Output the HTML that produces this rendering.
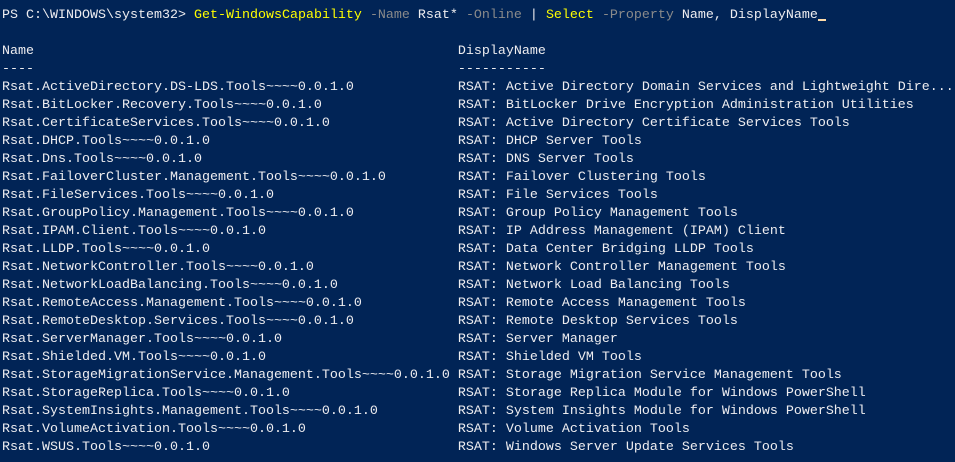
<html><head><style>
body{margin:0;background:#012456;width:955px;height:462px;overflow:hidden}
pre{margin:0;position:absolute;left:2px;top:7px;font-family:"Liberation Mono",monospace;font-size:13.33px;line-height:18px;color:#eeedf0}
.y{color:#ffff00}.g{color:#8a8a8a}
.c{display:inline-block;width:8px;height:2px;background:#fedba9;vertical-align:-3px}
</style></head><body><pre>PS C:\WINDOWS\system32> <span class="y">Get-WindowsCapability</span> <span class="g">-Name</span> Rsat* <span class="g">-Online</span> | <span class="y">Select</span> <span class="g">-Property</span> Name, DisplayName<span class="c"></span>

Name                                                     DisplayName
----                                                     -----------
Rsat.ActiveDirectory.DS-LDS.Tools~~~~0.0.1.0             RSAT: Active Directory Domain Services and Lightweight Dire...
Rsat.BitLocker.Recovery.Tools~~~~0.0.1.0                 RSAT: BitLocker Drive Encryption Administration Utilities
Rsat.CertificateServices.Tools~~~~0.0.1.0                RSAT: Active Directory Certificate Services Tools
Rsat.DHCP.Tools~~~~0.0.1.0                               RSAT: DHCP Server Tools
Rsat.Dns.Tools~~~~0.0.1.0                                RSAT: DNS Server Tools
Rsat.FailoverCluster.Management.Tools~~~~0.0.1.0         RSAT: Failover Clustering Tools
Rsat.FileServices.Tools~~~~0.0.1.0                       RSAT: File Services Tools
Rsat.GroupPolicy.Management.Tools~~~~0.0.1.0             RSAT: Group Policy Management Tools
Rsat.IPAM.Client.Tools~~~~0.0.1.0                        RSAT: IP Address Management (IPAM) Client
Rsat.LLDP.Tools~~~~0.0.1.0                               RSAT: Data Center Bridging LLDP Tools
Rsat.NetworkController.Tools~~~~0.0.1.0                  RSAT: Network Controller Management Tools
Rsat.NetworkLoadBalancing.Tools~~~~0.0.1.0               RSAT: Network Load Balancing Tools
Rsat.RemoteAccess.Management.Tools~~~~0.0.1.0            RSAT: Remote Access Management Tools
Rsat.RemoteDesktop.Services.Tools~~~~0.0.1.0             RSAT: Remote Desktop Services Tools
Rsat.ServerManager.Tools~~~~0.0.1.0                      RSAT: Server Manager
Rsat.Shielded.VM.Tools~~~~0.0.1.0                        RSAT: Shielded VM Tools
Rsat.StorageMigrationService.Management.Tools~~~~0.0.1.0 RSAT: Storage Migration Service Management Tools
Rsat.StorageReplica.Tools~~~~0.0.1.0                     RSAT: Storage Replica Module for Windows PowerShell
Rsat.SystemInsights.Management.Tools~~~~0.0.1.0          RSAT: System Insights Module for Windows PowerShell
Rsat.VolumeActivation.Tools~~~~0.0.1.0                   RSAT: Volume Activation Tools
Rsat.WSUS.Tools~~~~0.0.1.0                               RSAT: Windows Server Update Services Tools</pre></body></html>
